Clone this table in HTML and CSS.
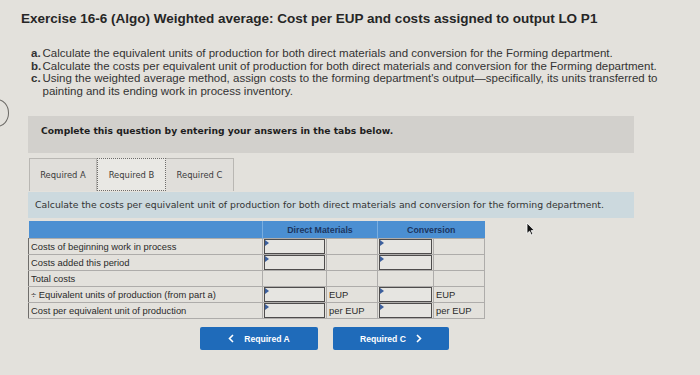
FILE: index.html
```html
<!DOCTYPE html>
<html lang="en">
  <head>
    <meta charset="UTF-8" />
    <meta name="viewport" content="width=device-width, initial-scale=1.0" />
    <title>Exercise 16-6 (Algo)</title>
    <link rel="stylesheet" href="styles.css">
  </head>
  <body>
    <span class="side-badge"></span>
    <h1 class="title">Exercise 16-6 (Algo) Weighted average: Cost per EUP and costs assigned to output LO P1</h1>
    <ul class="parts">
      <li><span class="letter">a.</span><span>Calculate the equivalent units of production for both direct materials and conversion for the Forming department.</span></li>
      <li><span class="letter">b.</span><span>Calculate the costs per equivalent unit of production for both direct materials and conversion for the Forming department.</span></li>
      <li><span class="letter">c.</span><span>Using the weighted average method, assign costs to the forming department's output—specifically, its units transferred to painting and its ending work in process inventory.</span></li>
    </ul>

    <div class="instructions">Complete this question by entering your answers in the tabs below.</div>

    <div class="tabs">
      <button class="tab">Required A</button>
      <button class="tab active">Required B</button>
      <button class="tab">Required C</button>
    </div>
    <div class="prompt">Calculate the costs per equivalent unit of production for both direct materials and conversion for the forming department.</div>

    <table class="eup-table">
      <colgroup>
        <col class="c-label">
        <col class="c-input-dm">
        <col class="c-unit">
        <col class="c-input-cv">
        <col class="c-unit">
      </colgroup>
      <thead>
        <tr>
          <th></th>
          <th colspan="2">Direct Materials</th>
          <th colspan="2">Conversion</th>
        </tr>
      </thead>
      <tbody>
        <tr>
          <td class="label">Costs of beginning work in process</td>
          <td><div class="field"></div></td><td></td>
          <td><div class="field"></div></td><td></td>
        </tr>
        <tr>
          <td class="label">Costs added this period</td>
          <td><div class="field"></div></td><td></td>
          <td><div class="field"></div></td><td></td>
        </tr>
        <tr>
          <td class="label">Total costs</td>
          <td></td><td></td>
          <td></td><td></td>
        </tr>
        <tr>
          <td class="label">÷ Equivalent units of production (from part a)</td>
          <td><div class="field"></div></td><td class="unit">EUP</td>
          <td><div class="field"></div></td><td class="unit">EUP</td>
        </tr>
        <tr>
          <td class="label">Cost per equivalent unit of production</td>
          <td><div class="field"></div></td><td class="unit">per EUP</td>
          <td><div class="field"></div></td><td class="unit">per EUP</td>
        </tr>
      </tbody>
    </table>

    <div class="nav">
      <button class="nav-btn">
        <svg width="6" height="9" viewBox="0 0 6 9"><path d="M5 1L1.5 4.5L5 8" fill="none" stroke="#fff" stroke-width="1.6"/></svg>
        Required A
      </button>
      <button class="nav-btn">
        Required C
        <svg width="6" height="9" viewBox="0 0 6 9"><path d="M1 1L4.5 4.5L1 8" fill="none" stroke="#fff" stroke-width="1.6"/></svg>
      </button>
    </div>

    <svg class="pointer" width="9" height="14" viewBox="0 0 9 14"><path d="M1 1L1 11.5L3.6 9.2L5.4 13L7 12.3L5.2 8.6L8.4 8.6Z" fill="#111" stroke="#fff" stroke-width="0.8"/></svg>
  </body>
</html>
```

FILE: styles.css
```css
body {
  margin: 0;
  background: #e3e1dc;
  font-family: "Liberation Sans", Arial, sans-serif;
  color: #2a2a2a;
  position: relative;
  min-height: 375px;
}

.side-badge {
  position: absolute;
  left: -15px;
  top: 99px;
  width: 22px;
  height: 26px;
  border: 1.5px solid #6a6864;
  border-radius: 50%;
}

.title {
  margin: 0;
  padding: 10px 0 0 21px;
  font-size: 13.5px;
  line-height: 17px;
  font-weight: bold;
  color: #262626;
}

.parts {
  list-style: none;
  margin: 20px 0 0 31px;
  padding: 0;
  font-size: 11.5px;
  line-height: 12.6px;
  color: #333;
  width: 659px;
}
.parts li {
  display: flex;
}
.letter {
  flex: 0 0 11.5px;
  font-weight: bold;
}

.instructions {
  margin: 19px 0 0 28px;
  width: 606px;
  height: 37px;
  box-sizing: border-box;
  padding: 9px 13px 0;
  background: #d2d0cc;
  font-family: "DejaVu Sans", Verdana, sans-serif;
  font-size: 9.2px;
  font-weight: bold;
  line-height: 12px;
  color: #1e1e1e;
}

.tabs {
  display: flex;
  margin: 5px 0 0 29px;
  height: 33px;
}
.tab {
  box-sizing: border-box;
  height: 33px;
  padding: 0;
  border: 1px solid #b9b7b3;
  border-bottom: none;
  background: #e0deda;
  font-family: "DejaVu Sans", Verdana, sans-serif;
  font-size: 8.4px;
  color: #3a3a3a;
  width: 68px;
}
.tab + .tab {
  border-left: none;
}
.tab.active {
  width: 69px;
  background: #e9e8e4;
  border: 1.5px dotted #6e6c6a;
}

.prompt {
  margin: 1px 0 0 28px;
  width: 606px;
  height: 26px;
  box-sizing: border-box;
  padding: 7px 7px 0;
  background: #ccd9de;
  font-family: "DejaVu Sans", Verdana, sans-serif;
  font-size: 9.3px;
  line-height: 12px;
  color: #333;
}

.eup-table {
  margin: 3px 0 0 28px;
  border-collapse: collapse;
  table-layout: fixed;
  width: 456px;
  font-size: 9.4px;
}
.c-label { width: 234px; }
.c-input-dm { width: 64px; }
.c-input-cv { width: 56px; }
.c-unit { width: 51px; }

.eup-table th {
  height: 17px;
  padding: 0;
  background: #4b8fd2;
  border-left: 1px solid #7aaee0;
  color: #1c3560;
  font-weight: bold;
  font-size: 8.8px;
}
.eup-table th:first-child {
  border-left: none;
}
.eup-table td {
  height: 15px;
  padding: 0;
  border: 1px solid #aeacaa;
  color: #2a2a2a;
  line-height: 11px;
}
.eup-table td.label,
.eup-table td.unit {
  padding-left: 2px;
}
.eup-table td:first-child {
  border-left: 1px solid #6f6d6b;
}

.field {
  position: relative;
  box-sizing: border-box;
  height: 15px;
  margin: 0 1px;
  border: 1.5px solid #4e4c4c;
  background: #e6e5e1;
}
.field::before {
  content: "";
  position: absolute;
  left: 0;
  top: 0;
  border-top: 3px solid transparent;
  border-bottom: 3px solid transparent;
  border-left: 4px solid #3c5f9c;
}

.nav {
  display: flex;
  gap: 15px;
  margin: 8px 0 0 200px;
}
.nav-btn {
  display: flex;
  align-items: center;
  justify-content: center;
  gap: 10px;
  width: 118px;
  height: 23px;
  padding: 0;
  border: none;
  border-radius: 2px;
  background: #1f6bba;
  color: #fff;
  font-family: "Liberation Sans", Arial, sans-serif;
  font-weight: bold;
  font-size: 8.6px;
}
.nav-btn + .nav-btn {
  width: 116px;
}

.pointer {
  position: absolute;
  left: 526px;
  top: 222px;
}
```
